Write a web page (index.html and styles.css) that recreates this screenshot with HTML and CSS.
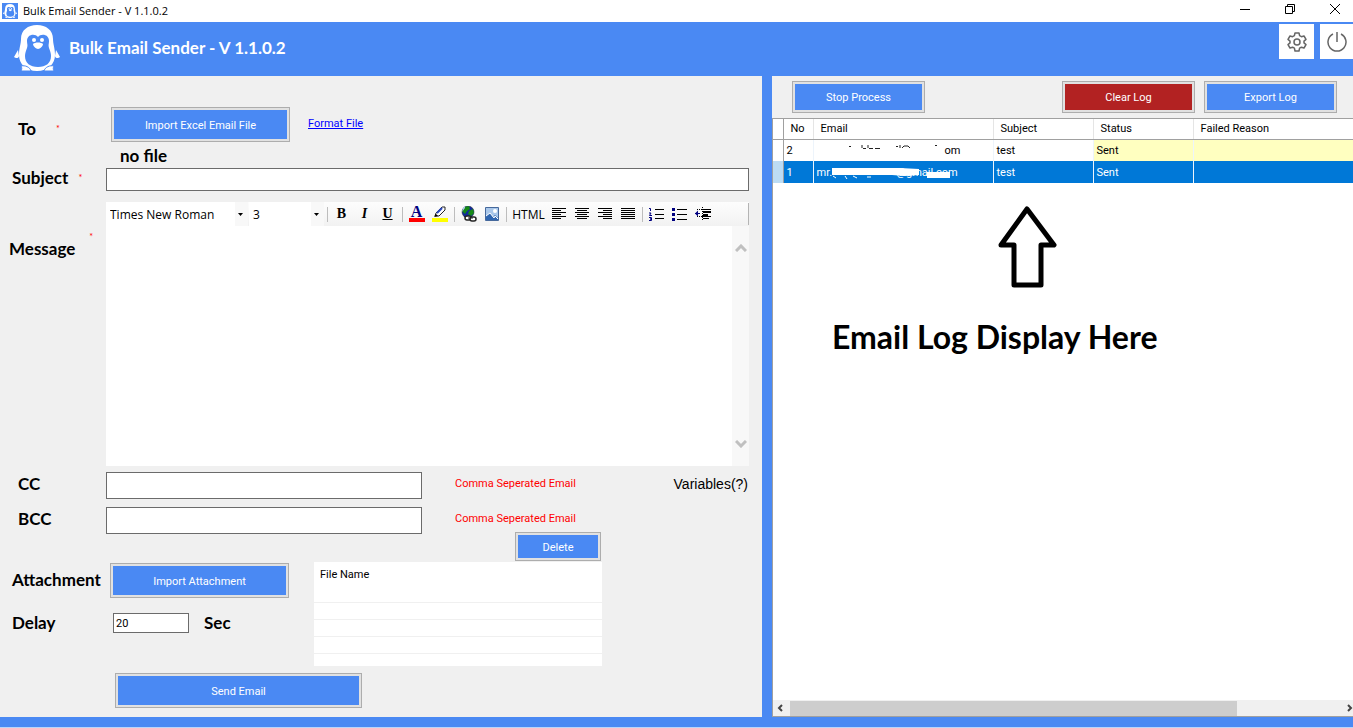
FILE: index.html
```html
<!DOCTYPE html>
<html lang="en">
<head>
  <meta charset="UTF-8" />
  <meta name="viewport" content="width=device-width, initial-scale=1.0" />
  <title>Bulk Email Sender - V 1.1.0.2</title>
  <link rel="stylesheet" href="styles.css">
</head>
<body>
  <!-- shared penguin logo -->
  <svg class="defs" width="0" height="0">
    <symbol id="penguin" viewBox="0 0 46 46">
      <path fill="#fff" d="M23 0C14 0 7 5 7 14c0 5-2 9-2 16 0 9 7 16 18 16s18-7 18-16c0-7-2-11-2-16C39 5 32 0 23 0z"/>
      <path fill="#4a89f3" d="M24 12c-3-4-11-3-11 4 0 3 1 4 0 7-1 3-2 5-2 8 0 7 5 11 13 11s13-4 13-11c0-3-1-5-2-8-1-3 0-4 0-7 0-7-8-8-11-4z"/>
      <circle cx="20" cy="15" r="2" fill="#fff"/>
      <circle cx="28" cy="15" r="2" fill="#fff"/>
      <path fill="#fff" d="M19 19c2-2 8-2 10 0 0 2-3 5-5 5s-5-3-5-5z"/>
      <path fill="#fff" d="M4 25L0 32c2 2 5 1 5-1zM42 25l4 7c-2 2-5 1-5-1z"/>
      <path fill="#fff" stroke="#4a89f3" stroke-width="1" d="M7 41c4-1 9 1 10 5H7c1-2 1-3 0-5zM40 41c-4-1-9 1-10 5h10c-1-2-1-3 0-5z"/>
    </symbol>
  </svg>

  <div class="titlebar">
    <svg class="titlebar-icon" width="16" height="16"><rect width="16" height="16" fill="#4a89f3"/><use href="#penguin" x="1" width="14" height="16"/></svg>
    <span class="titlebar-text">Bulk Email Sender - V 1.1.0.2</span>
    <button class="win-btn" aria-label="Minimize"><svg width="10" height="10"><path d="M0 5.5h10" stroke="#000"/></svg></button>
    <button class="win-btn" aria-label="Restore"><svg width="10" height="10" fill="none" stroke="#000"><path d="M.5 2.5h7v7h-7zM2.500 2.500v-2h7v7h-2"/></svg></button>
    <button class="win-btn" aria-label="Close"><svg width="10" height="10"><path d="M0 0l10 10M10 0L0 10" stroke="#000"/></svg></button>
  </div>

  <header class="header">
    <svg class="logo" width="46" height="46"><use href="#penguin" width="46" height="46"/></svg>
    <h1>Bulk Email Sender - V 1.1.0.2</h1>
    <button class="icon-btn" aria-label="Settings">
      <svg width="20" height="20" viewBox="0 0 20 20" fill="none" stroke="#666" stroke-width="1.500" stroke-linejoin="round"><path d="M8 1h4l.6 2.700 1.800 1L17 4l2 3.400-2 1.700v1.800l2 1.700-2 3.400-2.600-.8-1.800 1L12 19H8l-.6-2.800-1.800-1L3 16l-2-3.400 2-1.700V9.100L1 7.400 3 4l2.600.7 1.800-1z"/><circle cx="10" cy="10" r="3"/></svg>
    </button>
    <button class="icon-btn" aria-label="Exit">
      <svg width="20" height="20" viewBox="0 0 20 20" fill="none" stroke="#666" stroke-width="1.500"><path d="M6 2a9 9 0 1 0 8 0M10 0v10"/></svg>
    </button>
  </header>

  <main class="main">
    <form class="panel" onsubmit="return false">
      <div class="row row-to">
        <label class="label indent" for="importExcel">To <span class="star star-to">*</span></label>
        <button class="btn btn-import" id="importExcel" type="button">Import Excel Email File</button>
        <a class="format-link" href="#">Format File</a>
      </div>
      <p class="no-file">no file</p>

      <div class="row row-subject">
        <label class="label" for="subject">Subject <span class="star">*</span></label>
        <input class="field grow" id="subject" type="text" />
      </div>

      <div class="row row-message">
        <label class="label label-message" for="message">Message<span class="star star-message">*</span></label>
        <div class="editor">
          <div class="toolbar">
            <span class="pick pick-font">
              <select aria-label="Font"><option>Times New Roman</option></select>
              <svg width="5" height="3"><path d="M0 0h5L2.500 3z"/></svg>
            </span>
            <span class="pick pick-size">
              <select aria-label="Font size"><option>3</option></select>
              <svg width="5" height="3"><path d="M0 0h5L2.500 3z"/></svg>
            </span>
            <i class="sep"></i>
            <button class="tool serif" type="button"><b>B</b></button>
            <button class="tool serif" type="button"><em>I</em></button>
            <button class="tool serif" type="button"><u>U</u></button>
            <i class="sep"></i>
            <button class="tool tool-color" type="button" aria-label="Text color">
              <span class="letter">A</span>
              <svg width="16" height="4"><path fill="red" d="M0 0h16v4H0z"/></svg>
            </button>
            <button class="tool" type="button" aria-label="Highlight">
              <svg width="16" height="16"><path fill="#ff0" d="M0 12h16v4H0z"/><path d="M3 10l1-3 6-6h3v3l-6 6z" fill="#fff" stroke="#222"/><path d="M5 7l5-5" stroke="#2a48c0" stroke-width="2"/><path d="M2 11l4-1-2-2z"/></svg>
            </button>
            <i class="sep"></i>
            <button class="tool" type="button" aria-label="Insert link">
              <svg width="16" height="16"><circle cx="7" cy="6" r="6" fill="#102a9c" stroke="#222" stroke-width=".5"/><path fill="#168a16" d="M4 1l4-1 1 3-3 2-2 3-3-3zM8 5l4-2 1 4-3 3-3-2z"/><path fill="#aac8e8" d="M2 2l2-2v2L1 6z"/><g fill="#fff" stroke="#222" stroke-width="1.500"><rect x="4" y="10" width="6" height="4" rx="2"/><rect x="9" y="11" width="6" height="4" rx="2"/></g><path d="M7 12h5" stroke="#222"/></svg>
            </button>
            <button class="tool" type="button" aria-label="Insert image">
              <svg width="14" height="14"><path fill="#a9c7ea" stroke="#46699c" d="M.5.5h13v13H.5z"/><path fill="#2f66b0" d="M1 13V9l4-3 3 4 2-2 3 3v2z"/><path fill="none" stroke="#fff" d="M1 9l4-3 4 5 1-2 3 3"/><circle cx="10" cy="4" r="2" fill="#fff"/></svg>
            </button>
            <i class="sep"></i>
            <button class="tool tool-html" type="button">HTML</button>
            <button class="tool" type="button" aria-label="Align left"><svg width="14" height="12" stroke="#000"><path d="M0 .5h14M0 2.500h9M0 4.500h14M0 6.500h9M0 8.500h14M0 10.500h9"/></svg></button>
            <button class="tool" type="button" aria-label="Center"><svg width="14" height="12" stroke="#000"><path d="M0 .5h14M2 2.500h10M0 4.500h14M2 6.500h10M0 8.500h14M2 10.500h10"/></svg></button>
            <button class="tool" type="button" aria-label="Align right"><svg width="14" height="12" stroke="#000"><path d="M0 .5h14M5 2.500h9M0 4.500h14M5 6.500h9M0 8.500h14M5 10.500h9"/></svg></button>
            <button class="tool" type="button" aria-label="Justify"><svg width="14" height="12" stroke="#000"><path d="M0 .5h14M0 2.500h14M0 4.500h14M0 6.500h14M0 8.500h14M0 10.500h14"/></svg></button>
            <i class="sep"></i>
            <button class="tool" type="button" aria-label="Numbered list"><svg width="15" height="14" fill="none"><path stroke="#000" d="M6 2.500h9M6 7.500h9M6 11.500h9"/><path stroke="#000080" d="M0 1.500h1.500V4M0 6h2L.5 8.500H3M0 10.500h2.500v1.500H1h1.500v1.500H0"/></svg></button>
            <button class="tool" type="button" aria-label="Bullet list"><svg width="15" height="13"><path stroke="#000" d="M5 1.500h10M5 6.500h10M5 11.500h10"/><path fill="#000080" d="M0 0h3v3H0zM0 5h3v3H0zM0 10h3v3H0z"/></svg></button>
            <button class="tool" type="button" aria-label="Outdent"><svg width="16" height="14"><path stroke="#000" d="M7 2.500h9M7 9.500h9M8 11.500h6"/><path stroke="#000" stroke-width="2" d="M8 5h8M8 8h5"/><path stroke="#000" stroke-dasharray="1 1" d="M7.500 0v14M2 2.500h5M2 9.500h5"/><path stroke="#000080" d="M0 6.500h5"/><path fill="#000080" d="M0 6.500l3-3v6z"/></svg></button>
            <i class="toolbar-end"></i>
          </div>
          <div class="editor-body">
            <textarea id="message"></textarea>
            <div class="vscroll">
              <svg width="12" height="8"><path d="M1 7l5-5 5 5" fill="none" stroke="#c0c0c0" stroke-width="3"/></svg>
              <svg width="12" height="8"><path d="M1 1l5 5 5-5" fill="none" stroke="#c0c0c0" stroke-width="3"/></svg>
            </div>
          </div>
        </div>
      </div>

      <div class="row row-cc">
        <label class="label indent" for="cc">CC</label>
        <input class="field field-cc" id="cc" type="text" />
        <span class="hint">Comma Seperated Email</span>
        <span class="variables">Variables(?)</span>
      </div>
      <div class="row row-cc">
        <label class="label indent" for="bcc">BCC</label>
        <input class="field field-cc" id="bcc" type="text" />
        <span class="hint">Comma Seperated Email</span>
      </div>

      <div class="bottom">
        <div class="bottom-left">
          <div class="row row-attachment">
            <label class="label" for="importAttachment">Attachment</label>
            <button class="btn btn-import" id="importAttachment" type="button">Import Attachment</button>
          </div>
          <div class="row row-delay">
            <label class="label" for="delay">Delay</label>
            <input class="field field-delay" id="delay" type="text" value="20" />
            <span class="sec">Sec</span>
          </div>
        </div>
        <div class="files">
          <button class="btn btn-delete" type="button">Delete</button>
          <table class="file-table">
            <thead><tr><th>File Name</th></tr></thead>
            <tbody>
              <tr><td></td></tr>
              <tr><td></td></tr>
              <tr><td></td></tr>
              <tr><td></td></tr>
            </tbody>
          </table>
        </div>
      </div>

      <button class="btn btn-send" type="submit">Send Email</button>
    </form>

    <section class="log">
      <div class="log-actions">
        <button class="btn">Stop Process</button>
        <button class="btn btn-clear">Clear Log</button>
        <button class="btn">Export Log</button>
      </div>
      <div class="log-body">
        <table class="log-table">
          <colgroup><col class="c-mark"><col class="c-no"><col class="c-email"><col class="c-mid"><col class="c-mid"><col></colgroup>
          <thead>
            <tr><th></th><th>No</th><th>Email</th><th>Subject</th><th>Status</th><th>Failed Reason</th></tr>
          </thead>
          <tbody>
            <tr>
              <td></td>
              <td>2</td>
              <td>
                <div class="mail">
                  <svg width="128" height="16" fill="none" stroke="#222"><path d="M32 4.500h2M45 3v3M46 6.500h3M51 3v3M52 6.500h4M58 6.500h5M79 4.500h2M83 3v3M85 6l2-2h4l2 2M118 3.500h2"/></svg>
                  <span>om</span>
                </div>
              </td>
              <td>test</td>
              <td class="sent">Sent</td>
              <td class="sent"></td>
            </tr>
            <tr class="selected">
              <td></td>
              <td>1</td>
              <td>
                <div class="mail">
                  <span>mr.</span><span class="mail-rest">@gmail.com</span>
                  <svg class="scribble" width="140" height="16"><path fill="none" stroke="#fff" d="M16 10l3 2M28 10l2 3M36 10l4 2M50 11h4"/><path fill="#fff" d="M15 2h68l19 1v6l-14 1-13-1H15zM110 6h23v6h-23z"/></svg>
                </div>
              </td>
              <td>test</td>
              <td>Sent</td>
              <td></td>
            </tr>
          </tbody>
        </table>

        <div class="note">
          <svg width="60" height="84"><path d="M30 4L57 40H44V80H17V40H4z" fill="#fff" stroke="#000" stroke-width="5" stroke-linejoin="round"/></svg>
          <p>Email Log Display Here</p>
        </div>

        <div class="hscroll">
          <svg width="6" height="8"><path d="M5 1L2 4l3 3" fill="none" stroke="#444" stroke-width="2"/></svg>
          <div class="hscroll-track"><div class="hscroll-thumb"></div></div>
          <svg width="6" height="8"><path d="M1 1l3 3-3 3" fill="none" stroke="#444" stroke-width="2"/></svg>
        </div>
      </div>
    </section>
  </main>
</body>
</html>
```

FILE: styles.css
```css
* {
  box-sizing: border-box;
}

body {
  margin: 0;
  min-height: 100vh;
  display: flex;
  flex-direction: column;
  background: #4a89f3;
  border-bottom: 1px solid #b9d5fa;
  font-family: Roboto, "Liberation Sans", sans-serif;
  font-size: 11px;
  color: #000;
}

button, input, select, textarea {
  font: inherit;
  color: inherit;
}

svg {
  display: block;
  flex: none;
}

.defs {
  position: absolute;
}

/* window title bar */
.titlebar {
  display: flex;
  align-items: center;
  height: 22px;
  padding-left: 2px;
  background: #fff;
  font-family: "Open Sans", sans-serif;
  font-size: 11px;
}

.titlebar-text {
  margin: 0 auto 2px 5px;
}

.win-btn {
  display: flex;
  align-items: center;
  justify-content: center;
  width: 45px;
  height: 20px;
  margin-bottom: 4px;
  padding: 0;
  border: none;
  background: none;
}

.win-btn:last-child {
  width: 41px;
  padding-left: 5px;
}

/* blue header */
.header {
  display: flex;
  align-items: flex-start;
  gap: 6px;
  height: 54px;
  padding: 2px 0 0 14px;
  color: #fff;
}

.logo {
  margin-top: 1px;
}

.header h1 {
  margin: 14px auto 0 3px;
  font-family: Lato, sans-serif;
  font-size: 17px;
  line-height: 20px;
}

.icon-btn {
  display: flex;
  align-items: center;
  justify-content: center;
  width: 35px;
  height: 35px;
  padding: 0;
  border: none;
  background: #fff;
}

.icon-btn:last-child {
  width: 33px;
}

/* two panels */
.main {
  flex: 1;
  display: grid;
  grid-template-columns: 762fr 581fr;
  gap: 10px;
  padding-bottom: 10px;
}

.panel {
  padding: 31px 13px 8px 0;
  background: #f0f0f0;
}

.row {
  display: flex;
  align-items: center;
}

.label {
  flex: none;
  width: 106px;
  padding-left: 12px;
  white-space: nowrap;
}

.indent {
  padding-left: 18px;
}

.label, .no-file, .sec {
  font-family: Lato, sans-serif;
  font-size: 17px;
  line-height: 20px;
  font-weight: 700;
}

.star {
  margin-left: 6px;
  font-size: 9px;
  font-weight: 400;
  color: red;
  vertical-align: 3px;
}

.star-to {
  margin-left: 16px;
}

.btn {
  width: 133px;
  height: 32px;
  padding: 1px 0 0;
  border: 1px solid #adadad;
  outline: 2px solid #e1e1e1;
  outline-offset: -3px;
  background: #4a89f3;
  color: #fff;
}

.btn-import {
  width: 179px;
  height: 35px;
  margin-left: 5px;
}

.format-link {
  margin: 0 0 2px 18px;
  color: #0000ff;
}

.row-to .label {
  padding-top: 8px;
}

.row-subject .label {
  padding-bottom: 3px;
}

.no-file {
  margin: 4px 0 2px 120px;
}

.field {
  border: 1px solid #6b6b6b;
  background: #fff;
  padding: 0 2px;
}

.grow {
  flex: 1;
  height: 23px;
}

/* message editor */
.row-message {
  align-items: flex-start;
  margin-top: 11px;
}

.label-message {
  display: flex;
  align-items: flex-start;
  padding: 37px 0 0 9px;
}

.star-message {
  margin: -12px 0 0 14px;
}

.editor {
  flex: 1;
  min-width: 0;
}

.toolbar {
  display: flex;
  align-items: center;
  height: 24px;
  background: linear-gradient(#fdfdfd, #f2f2f2);
  font-family: "Open Sans", sans-serif;
  font-size: 12px;
}

.pick {
  position: relative;
  height: 24px;
  background: #fff;
}

.pick-font {
  width: 142px;
}

.pick-size {
  width: 75px;
  margin-left: 1px;
}

.pick select {
  appearance: none;
  width: 100%;
  height: 24px;
  padding: 0 16px 0 4px;
  border: none;
  background: linear-gradient(90deg, #fff calc(100% - 13px), #f8f8f8 0);
}

.pick svg {
  position: absolute;
  right: 5px;
  top: 11px;
}

.sep {
  width: 1px;
  height: 15px;
  margin: 0 2px 0 3px;
  background: #bdbdbd;
}

.tool {
  display: flex;
  align-items: center;
  justify-content: center;
  flex: none;
  width: 23px;
  height: 22px;
  padding: 0;
  border: none;
  background: none;
}

.tool-html {
  width: 37px;
  margin-left: 1px;
}

.serif {
  font-family: "Liberation Serif", serif;
  font-size: 14px;
  font-weight: 700;
}

.tool-color {
  flex-direction: column;
}

.letter {
  font-family: "Liberation Serif", serif;
  font-size: 16px;
  line-height: 12px;
  font-weight: 700;
  color: #000080;
}

.toolbar-end {
  width: 1px;
  height: 22px;
  margin-left: auto;
  background: #b4b4b4;
}

.editor-body {
  display: flex;
  height: 240px;
  background: #fff;
}

.editor-body textarea {
  flex: 1;
  border: none;
  resize: none;
  overflow: hidden;
}

.vscroll {
  display: flex;
  flex-direction: column;
  align-items: center;
  justify-content: space-between;
  width: 17px;
  padding: 18px 0;
  background: #f8f8f8;
}

/* cc / bcc */
.row-cc {
  margin-top: 6px;
}

.row-cc + .row-cc {
  margin-top: 8px;
}

.row-cc .label {
  padding-bottom: 4px;
}

.field-cc {
  width: 316px;
  height: 27px;
}

.hint {
  margin-left: 33px;
  padding-bottom: 4px;
  color: red;
}

.variables {
  margin-left: auto;
  padding: 0 1px 4px 0;
  font-family: "Liberation Sans", sans-serif;
  font-size: 14px;
}

/* attachments */
.bottom {
  display: flex;
  gap: 25px;
  margin-top: -2px;
}

.bottom-left {
  padding-top: 31px;
}

.row-attachment .label {
  padding-bottom: 2px;
}

.row-attachment .btn-import {
  margin-left: 4px;
}

.row-delay {
  margin-top: 15px;
}

.field-delay {
  width: 76px;
  height: 20px;
  margin: 0 15px 0 7px;
}

.files {
  display: flex;
  flex-direction: column;
  width: 288px;
}

.btn-delete {
  align-self: flex-end;
  width: 86px;
  height: 29px;
  margin: 0 1px 1px 0;
}

table {
  border-collapse: collapse;
}

.file-table {
  width: 100%;
  background: #fff;
}

.file-table th {
  height: 40px;
  padding: 6px;
  text-align: left;
  vertical-align: top;
  font-weight: 400;
}

.file-table td {
  height: 17px;
  padding: 0;
  border-top: 1px solid #f0f0f0;
}

.file-table tr:last-child td {
  height: 13px;
}

.btn-send {
  display: block;
  width: 247px;
  height: 35px;
  margin: 7px 0 0 115px;
}

/* log panel */
.log {
  display: flex;
  flex-direction: column;
  min-width: 0;
  background: #f0f0f0;
}

.log-actions {
  display: flex;
  gap: 9px;
  padding: 5px 16px 5px 20px;
}

.btn-clear {
  margin-left: auto;
  background: #b22222;
}

.log-body {
  flex: 1;
  display: flex;
  flex-direction: column;
  border: solid #a0a0a0;
  border-width: 1px 0 1px 1px;
  background: #fff;
}

.log-table {
  width: 100%;
  table-layout: fixed;
}

.c-mark {
  width: 10px;
}

.c-no {
  width: 30px;
}

.c-email {
  width: 180px;
}

.c-mid {
  width: 100px;
}

.log-table th {
  height: 20px;
  padding: 0 7px;
  border-right: 1px solid #e5e5e5;
  border-bottom: 1px solid #a0a0a0;
  text-align: left;
  font-weight: 400;
}

.log-table td {
  height: 22px;
  padding: 0 3px;
  border-right: 1px solid #edf4fb;
}

.log-table th:first-child,
.log-table td:first-child {
  border-right-color: #a0a0a0;
}

.log-table .sent {
  background: #ffffc0;
}

.log-table th:last-child,
.log-table td:last-child {
  border-right: none;
}

.selected {
  background: #0078d7;
  color: #fff;
}

.selected td:first-child {
  background: #bcdcf4;
}

.mail {
  position: relative;
  display: flex;
  align-items: center;
}

.mail-rest {
  margin-left: 64px;
}

.scribble {
  position: absolute;
  left: 0;
  top: 0;
}

.note {
  align-self: flex-start;
  display: flex;
  flex-direction: column;
  align-items: center;
  margin: 22px 0 0 59px;
}

.note svg {
  margin-left: 64px;
}

.note p {
  margin: 28px 0 0;
  font-family: Lato, sans-serif;
  font-size: 32px;
  line-height: 40px;
  font-weight: 700;
}

.hscroll {
  display: flex;
  align-items: center;
  height: 16px;
  margin-top: auto;
  padding-left: 4px;
  background: #f0f0f0;
}

.hscroll-track {
  flex: 1;
  margin: 0 5px 0 7px;
}

.hscroll-thumb {
  width: 81%;
  height: 15px;
  background: #cdcdcd;
}
```
